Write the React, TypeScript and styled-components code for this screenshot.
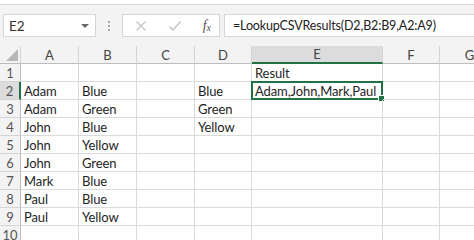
import * as React from "react";
import styled, { createGlobalStyle } from "styled-components";

const GlobalStyle = createGlobalStyle`
  html, body {
    margin: 0;
    padding: 0;
    background: #ffffff;
  }
  body {
    font-family: "Lato", "Open Sans", sans-serif;
    overflow: hidden;
  }
`;

const columns = [
  { key: "A", width: 58 },
  { key: "B", width: 58 },
  { key: "C", width: 58 },
  { key: "D", width: 57 },
  { key: "E", width: 131 },
  { key: "F", width: 57 },
  { key: "G", width: 60 },
];

const cellData: Record<string, string> = {
  E1: "Result",
  A2: "Adam",
  B2: "Blue",
  D2: "Blue",
  E2: "Adam,John,Mark,Paul",
  A3: "Adam",
  B3: "Green",
  D3: "Green",
  A4: "John",
  B4: "Blue",
  D4: "Yellow",
  A5: "John",
  B5: "Yellow",
  A6: "John",
  B6: "Green",
  A7: "Mark",
  B7: "Blue",
  A8: "Paul",
  B8: "Blue",
  A9: "Paul",
  B9: "Yellow",
};

const activeCol = "E";
const activeRow = 2;

const App: React.FunctionComponent = () => {
  const template = `21px ${columns.map((c) => `${c.width}px`).join(" ")}`;
  const rows = Array.from({ length: 10 }, (_, i) => i + 1);

  return (
    <Page>
      <GlobalStyle />
      <TopStrip />
      <FormulaRow>
        <NameBox>
          <span>E2</span>
          <DropArrow />
        </NameBox>
        <Grip>
          <i />
          <i />
          <i />
        </Grip>
        <FxBox>
          <svg width="12" height="12" viewBox="0 0 12 12">
            <path d="M1.5 1.5 L10.5 10.5 M10.5 1.5 L1.5 10.5" stroke="#c4c4c4" strokeWidth="1.4" fill="none" />
          </svg>
          <svg width="14" height="12" viewBox="0 0 14 12">
            <path d="M1.5 6.5 L5 10 L12.5 1.5" stroke="#c4c4c4" strokeWidth="1.5" fill="none" />
          </svg>
          <FxText>
            f<sub>x</sub>
          </FxText>
        </FxBox>
        <FormulaInput>=LookupCSVResults(D2,B2:B9,A2:A9)</FormulaInput>
      </FormulaRow>
      <Sheet style={{ gridTemplateColumns: template }}>
        <Corner>
          <svg width="12" height="12" viewBox="0 0 12 12">
            <path d="M12 0 L12 12 L0 12 Z" fill="#b8b8b8" />
          </svg>
        </Corner>
        {columns.map((c) => (
          <ColHeader key={c.key} $active={c.key === activeCol}>
            {c.key}
          </ColHeader>
        ))}
        {rows.map((r) => (
          <React.Fragment key={r}>
            <RowHeader $active={r === activeRow}>{r}</RowHeader>
            {columns.map((c) => {
              const id = `${c.key}${r}`;
              const selected = c.key === activeCol && r === activeRow;
              return (
                <Cell key={id}>
                  {cellData[id]}
                  {selected && (
                    <Selection>
                      <FillHandle />
                    </Selection>
                  )}
                </Cell>
              );
            })}
          </React.Fragment>
        ))}
      </Sheet>
    </Page>
  );
};

export default App;

const Page = styled.div`
  width: 474px;
  height: 240px;
  overflow: hidden;
  background: #f3f3f3;
`;

const TopStrip = styled.div`
  height: 4px;
  background: #ffffff;
  border-bottom: 1px solid #dcdcdc;
`;

const FormulaRow = styled.div`
  display: flex;
  align-items: center;
  height: 41px;
  padding-left: 3px;
  box-sizing: border-box;
`;

const boxBase = `
  height: 23px;
  box-sizing: border-box;
  background: #ffffff;
  border: 1px solid #d6d6d6;
  display: flex;
  align-items: center;
`;

const NameBox = styled.div`
  ${boxBase}
  width: 93px;
  padding: 0 6px 0 5px;
  justify-content: space-between;
  font-size: 13.5px;
  color: #333;
`;

const DropArrow = styled.div`
  width: 0;
  height: 0;
  border-left: 4px solid transparent;
  border-right: 4px solid transparent;
  border-top: 4px solid #6a6a6a;
`;

const Grip = styled.div`
  width: 26px;
  display: flex;
  flex-direction: column;
  align-items: center;
  gap: 2px;

  i {
    width: 2px;
    height: 2px;
    background: #a8a8a8;
  }
`;

const FxBox = styled.div`
  ${boxBase}
  width: 98px;
  padding: 0 8px 0 12px;
  justify-content: space-between;
`;

const FxText = styled.span`
  font-family: "Liberation Serif", serif;
  font-style: italic;
  font-size: 14px;
  color: #555;

  sub {
    font-size: 10px;
    vertical-align: -1px;
  }
`;

const FormulaInput = styled.div`
  ${boxBase}
  flex: 1;
  margin-left: 4px;
  border-right: none;
  padding-left: 8px;
  font-size: 12.5px;
  letter-spacing: -0.15px;
  color: #222;
  white-space: nowrap;
`;

const Sheet = styled.div`
  display: grid;
  grid-auto-rows: 18px;
  background: #ffffff;
`;

const headerBase = `
  background: #f3f3f3;
  box-sizing: border-box;
  display: flex;
  align-items: center;
  justify-content: center;
  color: #444;
  font-size: 13px;
`;

const Corner = styled.div`
  ${headerBase}
  border-right: 1px solid #d4d4d4;
  border-bottom: 1px solid #bdbdbd;
  justify-content: flex-end;
  align-items: flex-end;
  padding: 0 2px 2px 0;
`;

const ColHeader = styled.div<{ $active?: boolean }>`
  ${headerBase}
  border-right: 1px solid #d4d4d4;
  border-bottom: ${(p) => (p.$active ? "2px solid #217346" : "1px solid #bdbdbd")};
  background: ${(p) => (p.$active ? "#dcdcdc" : "#f3f3f3")};
  color: #444;
`;

const RowHeader = styled.div<{ $active?: boolean }>`
  ${headerBase}
  border-bottom: 1px solid #d4d4d4;
  border-right: ${(p) => (p.$active ? "2px solid #217346" : "1px solid #bdbdbd")};
  background: ${(p) => (p.$active ? "#dcdcdc" : "#f3f3f3")};
  color: #555;
`;

const Cell = styled.div`
  position: relative;
  box-sizing: border-box;
  border-right: 1px solid #dadada;
  border-bottom: 1px solid #dadada;
  padding-left: 3px;
  padding-top: 2px;
  font-size: 13px;
  letter-spacing: -0.1px;
  line-height: 17px;
  color: #1e1e1e;
  white-space: nowrap;
  display: flex;
  align-items: center;
`;

const Selection = styled.div`
  position: absolute;
  left: -1px;
  top: -1px;
  right: -1px;
  bottom: -1px;
  border: 2px solid #217346;
  pointer-events: none;
`;

const FillHandle = styled.div`
  position: absolute;
  right: -4px;
  bottom: -4px;
  width: 5px;
  height: 5px;
  background: #217346;
  border: 1px solid #ffffff;
`;
